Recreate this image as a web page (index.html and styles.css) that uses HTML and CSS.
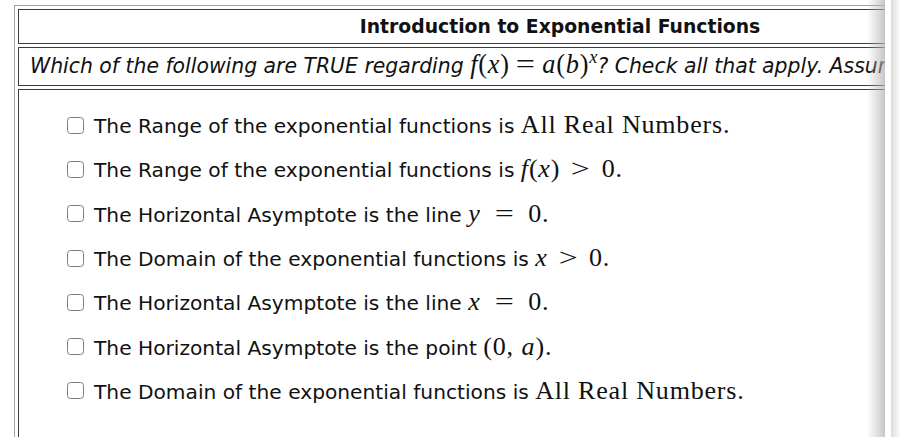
FILE: index.html
```html
<!DOCTYPE html>
<html>
<head>
<meta charset="utf-8">
<link rel="stylesheet" href="styles.css">
</head>
<body>
<div class="page">
  <table class="frame">
    <tr><td class="title">Introduction to Exponential Functions</td></tr>
    <tr><td class="question"><div class="qline">Which of the following are TRUE regarding <span class="m"><i>f</i>(<i>x</i>)<span class="rel qeq">=</span><i>a</i>(<i>b</i>)<sup><i>x</i></sup></span>? Check all that apply. Assume</div></td></tr>
    <tr><td class="answers">
      <ul class="opts">
        <li class="opt"><input type="checkbox" class="cb"><span>The Range of the exponential functions is <span class="m">All Real Numbers.</span></span></li>
        <li class="opt"><input type="checkbox" class="cb"><span>The Range of the exponential functions is <span class="m"><i>f</i>(<i>x</i>)<span class="rel gt">&gt;</span>0.</span></span></li>
        <li class="opt"><input type="checkbox" class="cb"><span>The Horizontal Asymptote is the line <span class="m"><i>y</i><span class="rel eq">=</span>0.</span></span></li>
        <li class="opt"><input type="checkbox" class="cb"><span>The Domain of the exponential functions is <span class="m"><i>x</i><span class="rel gt">&gt;</span>0.</span></span></li>
        <li class="opt"><input type="checkbox" class="cb"><span>The Horizontal Asymptote is the line <span class="m"><i>x</i><span class="rel eq">=</span>0.</span></span></li>
        <li class="opt"><input type="checkbox" class="cb"><span>The Horizontal Asymptote is the point <span class="m">(0,<span class="thin"></span><i>a</i>).</span></span></li>
        <li class="opt"><input type="checkbox" class="cb"><span>The Domain of the exponential functions is <span class="m">All Real Numbers.</span></span></li>
      </ul>
    </td></tr>
  </table>
  <div class="edge"></div>
</div>
</body>
</html>
```
FILE: styles.css
```css
html, body {
  margin: 0;
  padding: 0;
  background: #fff;
  overflow: hidden;
}
body {
  width: 901px;
  height: 437px;
  font-family: "DejaVu Sans", sans-serif;
  font-size: 20.2px;
  color: #111;
}
.page {
  position: relative;
  width: 901px;
  height: 437px;
  padding: 5px 0 0 14px;
  box-sizing: border-box;
  overflow: hidden;
}
.frame {
  border-collapse: separate;
  border-spacing: 3px;
  border: 1px solid #a4a4a4;
  width: 1092px;
  table-layout: fixed;
}
.frame td {
  border: 1px solid #3c3c3c;
  padding: 0;
  overflow: hidden;
}
.title {
  height: 32px;
  text-align: center;
  vertical-align: middle;
  font-weight: bold;
  font-size: 18.8px;
  white-space: nowrap;
  line-height: 1;
  padding-top: 1px !important;
}
.question {
  height: 37px;
  vertical-align: middle;
  font-style: italic;
  line-height: 1;
}
.qline {
  padding-left: 11px;
  margin-top: -2px;
  white-space: nowrap;
  font-size: 20.4px;
}
.answers {
  vertical-align: top;
  height: 400px;
}
.m {
  font-family: "Liberation Serif", "DejaVu Serif", serif;
  font-style: normal;
  font-size: 1.29em;
  letter-spacing: 0.03em;
  line-height: 1;
}
.m i {
  font-style: italic;
}
.m sup {
  font-size: 0.7em;
  line-height: 0;
  letter-spacing: 0;
}
.rel {
  display: inline-block;
  transform: scaleX(1.3);
}
.rel.eq {
  margin: 0 0.62em;
}
.rel.qeq {
  margin: 0 0.32em;
}
.rel.gt {
  margin: 0 0.5em;
}
.thin {
  display: inline-block;
  width: 0.3em;
}
.opts {
  list-style: none;
  margin: 0;
  padding: 13px 0 0 48px;
}
.opt {
  display: flex;
  align-items: center;
  gap: 10px;
  height: 44.3px;
  white-space: nowrap;
}
.cb {
  appearance: none;
  -webkit-appearance: none;
  margin: 0;
  width: 17px;
  height: 17px;
  border: 1.5px solid #7d7d7d;
  border-radius: 3.5px;
  background: #fff;
  box-sizing: border-box;
  flex: none;
}
.edge {
  position: absolute;
  top: 0;
  left: 867px;
  width: 34px;
  height: 100%;
  background: linear-gradient(to right,
    rgba(180,180,180,0) 0px,
    rgba(180,180,180,0.75) 18px,
    #ffffff 18px,
    #ffffff 24px,
    #dcdcdc 24px,
    #ffffff 34px);
}
```
